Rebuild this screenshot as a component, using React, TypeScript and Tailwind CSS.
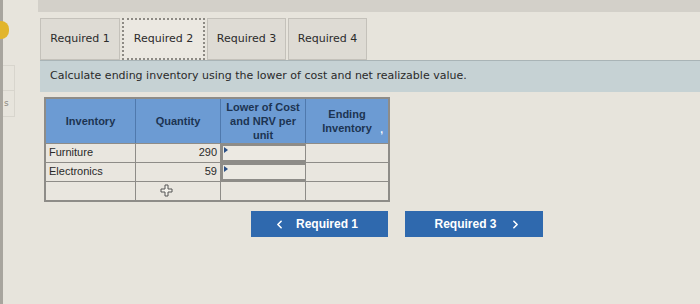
import { ChevronLeft, ChevronRight } from 'lucide-react';

const tabs = ['Required 1', 'Required 2', 'Required 3', 'Required 4'];

const rows = [
    { name: 'Furniture', qty: '290', input: true },
    { name: 'Electronics', qty: '59', input: true },
    { name: '', qty: '', input: false },
];

function Caret() {
    return <span className="absolute left-[1px] top-[1px] w-0 h-0 border-t-[3px] border-b-[3px] border-l-[4px] border-t-transparent border-b-transparent border-l-[#2a4f86]" />;
}

export default function App() {
    return (
        <div className="w-[700px] h-[304px] flex bg-[#e7e4dc] overflow-hidden font-['DejaVu_Sans',sans-serif]">
            {/* left rail */}
            <div className="w-[38px] shrink-0 flex">
                <div className="w-[3px] bg-[#a8a59e]" />
                <div className="flex-1 flex flex-col">
                    <div className="mt-[21px] -ml-[10px] w-[16px] h-[18px] rounded-full bg-[#e2b52c]" />
                    <div className="mt-[26px] w-[12px] h-[26px] border border-l-0 border-[#d8d5cd]" />
                    <div className="w-[12px] h-[26px] border border-l-0 border-t-0 border-[#d8d5cd] text-[9px] text-[#8a877f] pl-[1px] leading-[24px]">s</div>
                </div>
            </div>

            {/* main */}
            <div className="flex-1 flex flex-col">
                <div className="h-[12px] bg-[#d3d0c9]" />

                {/* tabs */}
                <div className="mt-[6px] ml-[2px] flex gap-[2px] items-end">
                    {tabs.map((t, i) => (
                        <div
                            key={t}
                            className={`h-[42px] flex items-center justify-center text-[11px] text-[#2b2b2b] ${i === 1
                                ? 'w-[83px] bg-[#ebe8e1] border-2 border-dotted border-[#8d8a84]'
                                : i === 0 ? 'w-[80px] bg-[#dedbd4] border border-[#c4c1ba]' : 'w-[79px] bg-[#dedbd4] border border-[#c4c1ba]'
                                }`}
                        >
                            {t}
                        </div>
                    ))}
                </div>

                {/* instruction band */}
                <div className="ml-[2px] h-[32px] bg-[#c6d2d4] border-t border-[#a9b4b6] flex items-center pl-[10px] text-[11px] text-[#2a2a2a]">
                    Calculate ending inventory using the lower of cost and net realizable value.
                </div>

                {/* table */}
                <div className="mt-[5px] ml-[6px] w-[346px] border-2 border-[#8e8c88] font-['Liberation_Sans',sans-serif] text-[11px]">
                    <div className="grid grid-cols-[90px_85px_85px_1fr] h-[44px] bg-[#6c9bd3] text-[#1c3452] font-bold text-center leading-[14px]">
                        <div className="flex items-center justify-center border-r border-[#4f79ad]">Inventory</div>
                        <div className="flex items-center justify-center border-r border-[#4f79ad]">Quantity</div>
                        <div className="flex items-center justify-center border-r border-[#4f79ad]">Lower of Cost<br />and NRV per<br />unit</div>
                        <div className="flex items-center justify-center relative">
                            <span>Ending<br />Inventory</span>
                            <span className="absolute right-[5px] top-[24px] text-white text-[10px]">,</span>
                        </div>
                    </div>
                    {rows.map((r, i) => (
                        <div key={i} className="grid grid-cols-[90px_85px_85px_1fr] h-[19px] border-t border-[#8e8c88] bg-[#e9e6df] text-[#2a2a2a]">
                            <div className="border-r border-[#8e8c88] pl-[3px] leading-[17px]">{r.name}</div>
                            <div className="border-r border-[#8e8c88] pr-[3px] text-right leading-[17px] relative">
                                {r.qty}
                                {i === 2 && (
                                    <svg className="absolute left-[24px] top-[2px]" width="13" height="14" viewBox="0 0 13 14">
                                        <path d="M5 1h3v4h4v3H8v4H5V8H1V5h4z" fill="#f4f2ec" stroke="#555" strokeWidth="1" />
                                    </svg>
                                )}
                            </div>
                            <div className={`relative border-r border-[#8e8c88] ${r.input ? 'border-2 border-[#3b4a66] bg-[#ece9e2]' : ''}`}>
                                {r.input && <Caret />}
                            </div>
                            <div />
                        </div>
                    ))}
                </div>

                {/* nav buttons */}
                <div className="mt-[9px] ml-[213px] flex gap-[17px] font-['Liberation_Sans',sans-serif]">
                    <button className="w-[137px] h-[26px] bg-[#2f69ae] text-white text-[12px] font-bold flex items-center justify-center gap-[10px] pr-[8px]">
                        <ChevronLeft size={13} strokeWidth={3} />
                        Required 1
                    </button>
                    <button className="w-[138px] h-[26px] bg-[#2f69ae] text-white text-[12px] font-bold flex items-center justify-center gap-[12px] pl-[8px]">
                        Required 3
                        <ChevronRight size={13} strokeWidth={3} />
                    </button>
                </div>
            </div>
        </div>
    );
}
